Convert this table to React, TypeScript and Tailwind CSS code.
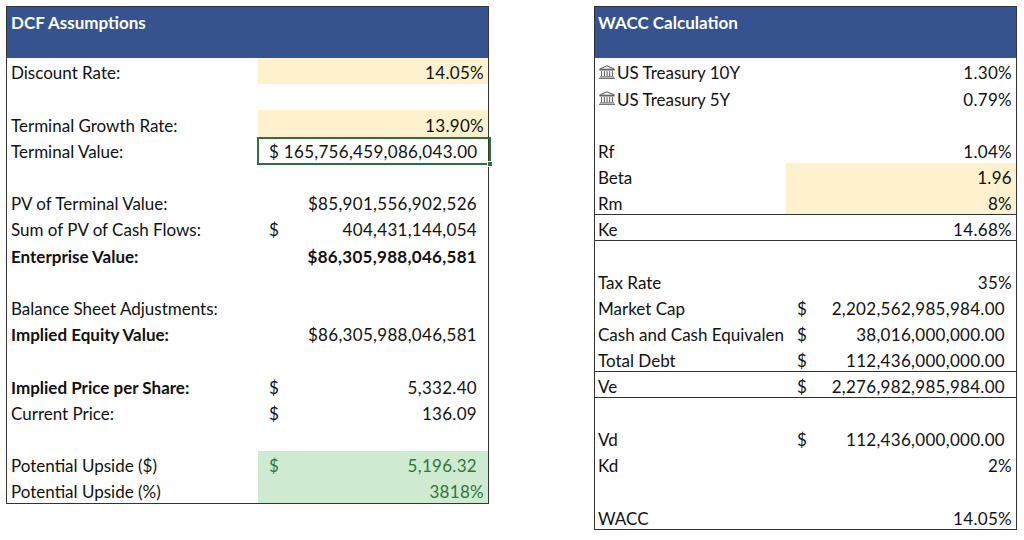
import React from "react";

type RowProps = {
  label?: React.ReactNode;
  bold?: boolean;
  boldValue?: boolean;
  dollar?: boolean;
  value?: string;
  fill?: "yellow" | "green";
  acct?: boolean;
  selected?: boolean;
  borderBottom?: boolean;
  labelW: string;
  labelPad: string;
};

function Bank() {
  return (
    <svg width="18" height="14" viewBox="0 0 18 14" className="mr-[1px] shrink-0 mb-[2px]">
      <path d="M1.5 4.2 L9 0.8 L16.5 4.2 Z" fill="none" stroke="#555" strokeWidth="1" strokeLinejoin="round" />
      <rect x="1.5" y="4.4" width="15" height="1.1" fill="#555" />
      <rect x="3" y="6.2" width="1.1" height="5" fill="#666" />
      <rect x="5.9" y="6.2" width="1.1" height="5" fill="#666" />
      <rect x="8.5" y="6.2" width="1.1" height="5" fill="#666" />
      <rect x="11.1" y="6.2" width="1.1" height="5" fill="#666" />
      <rect x="13.9" y="6.2" width="1.1" height="5" fill="#666" />
      <rect x="2" y="11.4" width="14" height="0.9" fill="#555" />
      <rect x="1" y="12.8" width="16" height="1" fill="#555" />
    </svg>
  );
}

function Row({ label, bold, boldValue, dollar, value, fill, acct, selected, borderBottom, labelW, labelPad }: RowProps) {
  const fillCls = fill === "yellow" ? "bg-[#fdf2cd]" : fill === "green" ? "bg-[#ceebd1]" : "";
  const textCls = fill === "green" ? "text-[#34733c]" : "text-[#111]";
  return (
    <div className={`flex h-[26.2px] ${borderBottom ? "border-b-[1.5px] border-[#333]" : ""}`}>
      <div className={`${labelW} ${labelPad} shrink-0 flex items-center pt-[4px] overflow-hidden whitespace-nowrap text-[#111] ${bold ? "font-bold" : ""}`}>
        {label}
      </div>
      <div className={`relative flex-1 flex items-center pt-[4px] ${fillCls} ${textCls}`}>
        {selected && (
          <div className="absolute left-[-1px] right-[-3px] top-0 bottom-[-2px] border-2 border-[#2f6f3d]">
            <div className="absolute right-[-4px] bottom-[-4px] w-[6px] h-[6px] bg-[#2f6f3d] border border-white"></div>
          </div>
        )}
        {selected ? (
          <span className="pl-[11px] whitespace-nowrap tracking-[0.3px]">{value}</span>
        ) : (
          <>
            <span className="pl-[11px] w-[30px]">{dollar ? "$" : ""}</span>
            <span className={`flex-1 text-right whitespace-nowrap tracking-[0.3px] ${acct ? "pr-[11px]" : "pr-[4px]"} ${boldValue ? "font-bold" : ""}`}>
              {value}
            </span>
          </>
        )}
      </div>
    </div>
  );
}

export default function App() {
  const L = { labelW: "w-[251px]", labelPad: "pl-[4px]" };
  const R = { labelW: "w-[191px]", labelPad: "pl-[3px]" };
  return (
    <div
      className="w-[1024px] h-[540px] bg-white flex items-start pt-[6px] pl-[6px] text-[17px]"
      style={{ fontFamily: "Lato, 'Noto Sans', sans-serif" }}
    >
      <div className="w-[483px] border-[1.5px] border-[#333] flex flex-col">
        <div className="h-[51px] bg-[#36538f] text-white font-bold pl-[4px] pt-[3px]">DCF Assumptions</div>
        <Row {...L} label="Discount Rate:" fill="yellow" value="14.05%" />
        <Row {...L} />
        <Row {...L} label="Terminal Growth Rate:" fill="yellow" value="13.90%" />
        <Row {...L} label="Terminal Value:" selected value="$ 165,756,459,086,043.00" />
        <Row {...L} />
        <Row {...L} label="PV of Terminal Value:" value="$85,901,556,902,526" acct />
        <Row {...L} label="Sum of PV of Cash Flows:" dollar value="404,431,144,054" acct />
        <Row {...L} label="Enterprise Value:" bold boldValue value="$86,305,988,046,581" acct />
        <Row {...L} />
        <Row {...L} label="Balance Sheet Adjustments:" />
        <Row {...L} label="Implied Equity Value:" bold value="$86,305,988,046,581" acct />
        <Row {...L} />
        <Row {...L} label="Implied Price per Share:" bold dollar value="5,332.40" acct />
        <Row {...L} label="Current Price:" dollar value="136.09" acct />
        <Row {...L} />
        <Row {...L} label="Potential Upside ($)" fill="green" dollar value="5,196.32" acct />
        <Row {...L} label="Potential Upside (%)" fill="green" value="3818%" />
      </div>

      <div className="ml-[105px] w-[423px] border-[1.5px] border-[#333] flex flex-col">
        <div className="h-[51px] bg-[#36538f] text-white font-bold pl-[3px] pt-[3px]">WACC Calculation</div>
        <Row {...R} label={<><Bank />US Treasury 10Y</>} value="1.30%" />
        <Row {...R} label={<><Bank />US Treasury 5Y</>} value="0.79%" />
        <Row {...R} />
        <Row {...R} label="Rf" value="1.04%" />
        <Row {...R} label="Beta" fill="yellow" value="1.96" />
        <Row {...R} label="Rm" fill="yellow" value="8%" borderBottom />
        <Row {...R} label="Ke" value="14.68%" borderBottom />
        <Row {...R} />
        <Row {...R} label="Tax Rate" value="35%" />
        <Row {...R} label="Market Cap" dollar value="2,202,562,985,984.00" acct />
        <Row {...R} label="Cash and Cash Equivalen" dollar value="38,016,000,000.00" acct />
        <Row {...R} label="Total Debt" dollar value="112,436,000,000.00" acct borderBottom />
        <Row {...R} label="Ve" dollar value="2,276,982,985,984.00" acct borderBottom />
        <Row {...R} />
        <Row {...R} label="Vd" dollar value="112,436,000,000.00" acct />
        <Row {...R} label="Kd" value="2%" />
        <Row {...R} />
        <Row {...R} label="WACC" value="14.05%" />
      </div>
    </div>
  );
}
